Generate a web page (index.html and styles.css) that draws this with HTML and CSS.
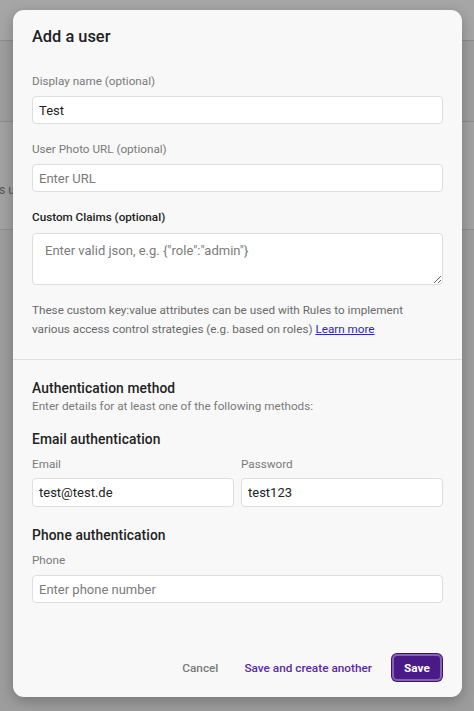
FILE: index.html
```html
<!DOCTYPE html>
<html>
<head>
<meta charset="utf-8">
<link rel="stylesheet" href="styles.css">
</head>
<body>
<div class="backdrop">
  <div class="bg-top"></div>
  <div class="bg-band"></div>
  <div class="bg-row"><span class="bg-text">s u</span></div>
  <div class="bg-rest"></div>
</div>
<div class="dialog">
  <h1 class="title">Add a user</h1>
  <label class="label first">Display name (optional)</label>
  <input class="field" type="text" value="Test">
  <label class="label">User Photo URL (optional)</label>
  <input class="field" type="text" placeholder="Enter URL">
  <label class="label strong">Custom Claims (optional)</label>
  <textarea class="area" placeholder="Enter valid json, e.g. {&quot;role&quot;:&quot;admin&quot;}"></textarea>
  <p class="help">These custom key:value attributes can be used with Rules to implement various access control strategies (e.g. based on roles) <a href="#" class="link">Learn more</a></p>
  <div class="divider"></div>
  <h2 class="section">Authentication method</h2>
  <p class="sub">Enter details for at least one of the following methods:</p>
  <h3 class="group">Email authentication</h3>
  <div class="pair">
    <div class="col">
      <label class="label tight">Email</label>
      <input class="field" type="text" value="test@test.de">
    </div>
    <div class="col">
      <label class="label tight">Password</label>
      <input class="field" type="text" value="test123">
    </div>
  </div>
  <h3 class="group phone">Phone authentication</h3>
  <label class="label tight">Phone</label>
  <input class="field" type="text" placeholder="Enter phone number">
  <div class="footer">
    <button class="btn cancel">Cancel</button>
    <button class="btn another">Save and create another</button>
    <button class="btn save">Save</button>
  </div>
</div>
</body>
</html>
```
FILE: styles.css
```css
* { box-sizing: border-box; }
html, body { margin: 0; padding: 0; }
body {
  width: 474px;
  height: 711px;
  overflow: hidden;
  background: #9d9d9d;
  font-family: Roboto, "Liberation Sans", sans-serif;
  position: relative;
}
.backdrop { display: flex; flex-direction: column; }
.bg-top { height: 41px; background: #a6a6a6; border-bottom: 1px solid #8c8c8c; }
.bg-band { height: 81px; background: #9e9e9e; border-bottom: 1px solid #8c8c8c; }
.bg-row { height: 108px; background: #a2a2a2; border-bottom: 1px solid #8e8e8e; display: flex; align-items: center; padding-top: 28px; }
.bg-text { font-size: 12px; color: #555; margin-left: -1px; }
.bg-rest { flex: 1; }

.dialog {
  position: absolute;
  left: 13px;
  top: 10px;
  width: 449px;
  height: 687px;
  background: #f8f8f8;
  border-radius: 11px;
  box-shadow: 0 4px 14px rgba(0,0,0,0.25);
  padding: 16px 19px 16px 19px;
  display: flex;
  flex-direction: column;
}
.title {
  margin: 0;
  font-size: 16.4px;
  line-height: 22px;
  font-weight: 500;
  color: #202124;
}
.label {
  display: block;
  font-size: 11.7px;
  line-height: 16px;
  color: #7a7a7a;
  margin: 17px 0 7px;
}
.label.first { margin-top: 25px; }
.label.strong { color: #222; font-weight: 500; margin-bottom: 8px; }
.label.tight { margin-top: 8px; margin-bottom: 6px; }
.field {
  display: block;
  width: 100%;
  height: 28px;
  border: 1px solid #dedede;
  border-radius: 4px;
  background: #fff;
  padding: 0 6px;
  font-family: Roboto, "Liberation Sans", sans-serif;
  font-size: 13px;
  color: #222;
  outline: none;
}
.pair .field { height: 29px; }
.field::placeholder, .area::placeholder { color: #7b7b7b; }
.area {
  display: block;
  width: 100%;
  height: 52px;
  border: 1px solid #dedede;
  border-radius: 4px;
  background: #fff;
  padding: 8px 12px;
  font-family: Roboto, "Liberation Sans", sans-serif;
  font-size: 13px;
  line-height: 18px;
  color: #222;
  outline: none;
}
.help {
  margin: 16px 0 0;
  font-size: 11.7px;
  line-height: 19px;
  color: #6a6a6a;
}
.link { color: #2727c8; text-decoration: underline; }
.divider {
  height: 1px;
  background: #e0e0e0;
  margin: 20px -19px 0;
}
.section {
  margin: 19px 0 0;
  font-size: 13.8px;
  line-height: 18px;
  font-weight: 500;
  color: #222;
  letter-spacing: 0.1px;
}
.sub {
  margin: 1px 0 0;
  font-size: 11.7px;
  line-height: 16px;
  color: #7a7a7a;
}
.group {
  margin: 16px 0 0;
  font-size: 13.8px;
  line-height: 18px;
  font-weight: 500;
  color: #222;
  letter-spacing: 0.1px;
}
.group.phone { margin-top: 19px; }
.pair { display: flex; gap: 7px; }
.col { flex: 1; min-width: 0; }
.phone + .label + .field { margin-top: 1px; }
.footer {
  margin-top: auto;
  display: flex;
  justify-content: flex-end;
  align-items: center;
}
.btn {
  font-family: Roboto, "Liberation Sans", sans-serif;
  font-size: 11.8px;
  font-weight: 500;
  background: none;
  border: none;
  height: 27px;
  padding: 0 10px;
}
.cancel { color: #7a7a7a; margin-right: 6px; }
.another { color: #5a2aa0; margin-right: 10px; }
.save {
  color: #fff;
  background: #4a1a87;
  border: 2px solid #8462b8;
  box-shadow: 0 0 0 1px #3a146e;
  border-radius: 5px;
  width: 50px;
  padding: 0;
  margin-right: 1px;
  font-weight: 700;
}
```
